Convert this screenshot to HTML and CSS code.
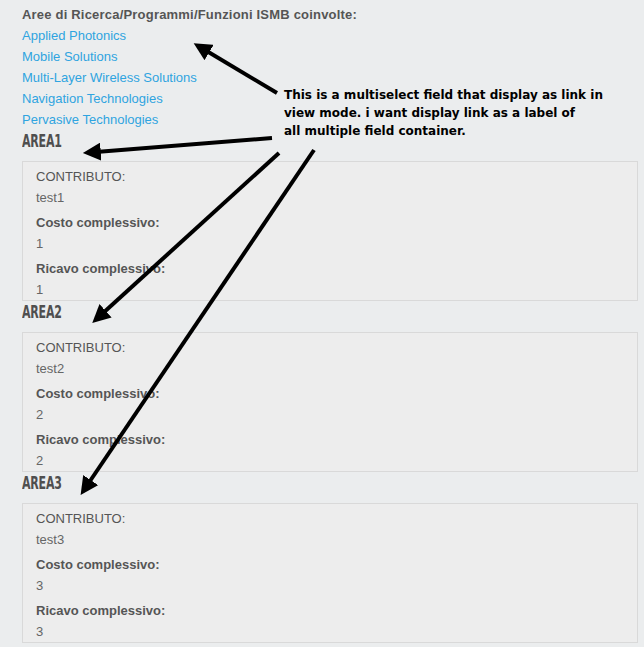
FILE: index.html
```html
<!DOCTYPE html>
<html>
<head>
<meta charset="utf-8">
<link rel="stylesheet" href="styles.css">
</head>
<body>
<div class="page">
  <div class="field-title">Aree di Ricerca/Programmi/Funzioni ISMB coinvolte:</div>
  <ul class="links">
    <li><a href="#">Applied Photonics</a></li>
    <li><a href="#">Mobile Solutions</a></li>
    <li><a href="#">Multi-Layer Wireless Solutions</a></li>
    <li><a href="#">Navigation Technologies</a></li>
    <li><a href="#">Pervasive Technologies</a></li>
  </ul>

  <h3 class="area-title">AREA1</h3>
  <div class="area-box">
    <div class="field"><div class="label">CONTRIBUTO:</div><div class="value">test1</div></div>
    <div class="field"><div class="label bold">Costo complessivo:</div><div class="value">1</div></div>
    <div class="field last"><div class="label bold">Ricavo complessivo:</div><div class="value">1</div></div>
  </div>

  <h3 class="area-title">AREA2</h3>
  <div class="area-box">
    <div class="field"><div class="label">CONTRIBUTO:</div><div class="value">test2</div></div>
    <div class="field"><div class="label bold">Costo complessivo:</div><div class="value">2</div></div>
    <div class="field last"><div class="label bold">Ricavo complessivo:</div><div class="value">2</div></div>
  </div>

  <h3 class="area-title">AREA3</h3>
  <div class="area-box">
    <div class="field"><div class="label">CONTRIBUTO:</div><div class="value">test3</div></div>
    <div class="field"><div class="label bold">Costo complessivo:</div><div class="value">3</div></div>
    <div class="field last"><div class="label bold">Ricavo complessivo:</div><div class="value">3</div></div>
  </div>
</div>

<div class="note">This is a multiselect field that display as link in<br>view mode. i want display link as a label of<br>all multiple field container.</div>

<svg class="arrows" width="644" height="647" viewBox="0 0 644 647">
  <defs>
    <marker id="head" markerWidth="4.5" markerHeight="4.5" refX="1.2" refY="2.25" orient="auto" markerUnits="strokeWidth">
      <path d="M0,0 L4.5,2.25 L0,4.5 z" fill="#000"/>
    </marker>
  </defs>
  <g stroke="#000" stroke-width="4" fill="none">
    <line x1="277" y1="93" x2="205" y2="50" marker-end="url(#head)"/>
    <line x1="272" y1="138" x2="96" y2="152" marker-end="url(#head)"/>
    <line x1="279" y1="153" x2="102" y2="314" marker-end="url(#head)"/>
    <line x1="314" y1="150" x2="88" y2="484" marker-end="url(#head)"/>
  </g>
</svg>
</body>
</html>
```
FILE: styles.css
```css
html, body {
  margin: 0;
  padding: 0;
  background: #ebedee;
}
body {
  font-family: "Liberation Sans", Arial, sans-serif;
  font-size: 13px;
  color: #555;
  width: 644px;
  height: 647px;
  overflow: hidden;
  position: relative;
}
.page {
  padding: 4px 6px 0 22px;
}
.field-title {
  font-weight: bold;
  line-height: 21px;
  color: #555;
  letter-spacing: 0.2px;
}
.links {
  list-style: none;
  margin: 0;
  padding: 0;
}
.links li {
  line-height: 21px;
}
.links a {
  color: #2fa4e0;
  text-decoration: none;
}
.area-title {
  margin: 0 0 9px 0;
  padding-top: 1px;
  font-family: "DejaVu Sans Condensed", "Liberation Sans Narrow", sans-serif;
  font-weight: bold;
  font-size: 17px;
  line-height: 21px;
  color: #4f4f4f;
  letter-spacing: -0.3px;
  transform-origin: left center;
  transform: scaleX(0.72) scaleY(1.08);
}
.area-box {
  background: #ededed;
  border: 1px solid #d9d9d9;
  padding: 4px 14px 0 13px;
}
.field {
  margin-bottom: 4px;
}
.field.last {
  margin-bottom: 0;
}
.label {
  line-height: 21px;
  color: #555;
}
.label.bold {
  font-weight: bold;
}
.value {
  line-height: 21px;
  color: #666;
}
.note {
  position: absolute;
  left: 284px;
  top: 86px;
  font-family: "DejaVu Sans", Tahoma, sans-serif;
  font-weight: bold;
  font-size: 12px;
  line-height: 18px;
  color: #000;
}
.arrows {
  position: absolute;
  left: 0;
  top: 0;
  pointer-events: none;
}
```
